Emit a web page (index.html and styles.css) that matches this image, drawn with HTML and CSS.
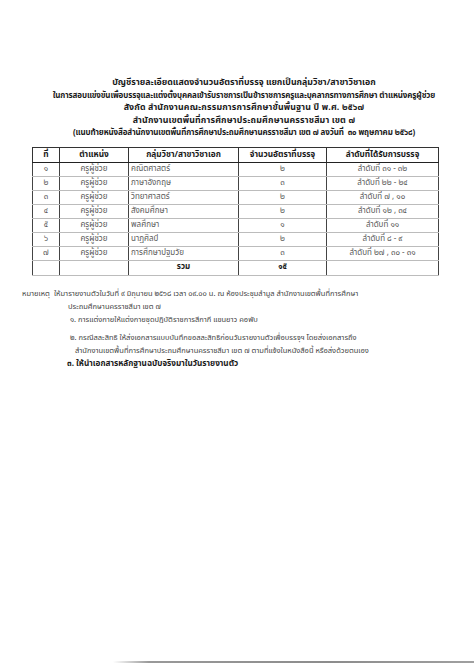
FILE: index.html
```html
<!DOCTYPE html>
<html lang="th">
<head>
<meta charset="utf-8">
<title>บัญชีรายละเอียดแสดงจำนวนอัตราที่บรรจุ</title>
<link rel="stylesheet" href="styles.css">
</head>
<body>
<div class="page">
  <div class="title">
    <div class="t-line t-first">บัญชีรายละเอียดแสดงจำนวนอัตราที่บรรจุ แยกเป็นกลุ่มวิชา/สาขาวิชาเอก</div>
    <div class="t-line">ในการสอบแข่งขันเพื่อบรรจุและแต่งตั้งบุคคลเข้ารับราชการเป็นข้าราชการครูและบุคลากรทางการศึกษา ตำแหน่งครูผู้ช่วย</div>
    <div class="t-line t-wide">สังกัด สำนักงานคณะกรรมการการศึกษาขั้นพื้นฐาน ปี พ.ศ. ๒๕๖๗</div>
    <div class="t-line t-wide">สำนักงานเขตพื้นที่การศึกษาประถมศึกษานครราชสีมา เขต ๗</div>
    <div class="t-line">(แนบท้ายหนังสือสำนักงานเขตพื้นที่การศึกษาประถมศึกษานครราชสีมา เขต ๗ ลงวันที่&nbsp; ๓๐ พฤษภาคม ๒๕๖๘)</div>
  </div>

  <table class="grid">
    <colgroup>
      <col class="c1"><col class="c2"><col class="c3"><col class="c4"><col class="c5">
    </colgroup>
    <thead>
      <tr>
        <th>ที่</th><th>ตำแหน่ง</th><th>กลุ่มวิชา/สาขาวิชาเอก</th><th>จำนวนอัตราที่บรรจุ</th><th>ลำดับที่ได้รับการบรรจุ</th>
      </tr>
    </thead>
    <tbody>
      <tr><td class="ctr">๑</td><td class="ctr">ครูผู้ช่วย</td><td>คณิตศาสตร์</td><td class="ctr">๒</td><td class="ctr">ลำดับที่ ๓๑ - ๓๒</td></tr>
      <tr><td class="ctr">๒</td><td class="ctr">ครูผู้ช่วย</td><td>ภาษาอังกฤษ</td><td class="ctr">๓</td><td class="ctr">ลำดับที่ ๒๒ - ๒๔</td></tr>
      <tr><td class="ctr">๓</td><td class="ctr">ครูผู้ช่วย</td><td>วิทยาศาสตร์</td><td class="ctr">๒</td><td class="ctr">ลำดับที่ ๗ , ๑๐</td></tr>
      <tr><td class="ctr">๔</td><td class="ctr">ครูผู้ช่วย</td><td>สังคมศึกษา</td><td class="ctr">๒</td><td class="ctr">ลำดับที่ ๑๒ , ๓๔</td></tr>
      <tr><td class="ctr">๕</td><td class="ctr">ครูผู้ช่วย</td><td>พลศึกษา</td><td class="ctr">๑</td><td class="ctr">ลำดับที่ ๑๑</td></tr>
      <tr><td class="ctr">๖</td><td class="ctr">ครูผู้ช่วย</td><td>นาฏศิลป์</td><td class="ctr">๒</td><td class="ctr">ลำดับที่ ๘ - ๙</td></tr>
      <tr><td class="ctr">๗</td><td class="ctr">ครูผู้ช่วย</td><td>การศึกษาปฐมวัย</td><td class="ctr">๓</td><td class="ctr">ลำดับที่ ๒๗ , ๓๐ - ๓๑</td></tr>
      <tr class="total"><td></td><td></td><td class="ctr">รวม</td><td class="ctr">๑๕</td><td></td></tr>
    </tbody>
  </table>

  <div class="notes">
    <div class="n-head"><span class="n-label">หมายเหตุ</span><span class="n-text">ให้มารายงานตัวในวันที่ ๙ มิถุนายน ๒๕๖๘ เวลา ๐๙.๐๐ น. ณ ห้องประชุมลำมูล สำนักงานเขตพื้นที่การศึกษา</span></div>
    <div class="n-cont">ประถมศึกษานครราชสีมา เขต ๗</div>
    <div class="n-item">๑. การแต่งกายให้แต่งกายชุดปฏิบัติราชการสีกากี แขนยาว คอพับ</div>
    <div class="n-item n-gap">๒. กรณีสละสิทธิ ให้ส่งเอกสารแบบบันทึกขอสละสิทธิก่อนวันรายงานตัวเพื่อบรรจุฯ โดยส่งเอกสารถึง</div>
    <div class="n-item n-sub">สำนักงานเขตพื้นที่การศึกษาประถมศึกษานครราชสีมา เขต ๗ ตามที่แจ้งในหนังสือนี้ หรือส่งด้วยตนเอง</div>
    <div class="n-item n-bold">๓. ให้นำเอกสารหลักฐานฉบับจริงมาในวันรายงานตัว</div>
  </div>

  <div class="scan-edge"></div>
</div>
</body>
</html>
```

FILE: styles.css
```css
html, body {
  margin: 0;
  padding: 0;
  background: #ffffff;
}

body {
  width: 474px;
  height: 670px;
  overflow: hidden;
  font-family: "Noto Sans Thai", "Loma", "Garuda", "Noto Sans", "DejaVu Sans", sans-serif;
  color: #2b2b2b;
}

.page {
  display: flex;
  flex-direction: column;
  height: 670px;
  box-sizing: border-box;
  padding-top: 77px;
}

.title {
  display: flex;
  flex-direction: column;
  align-items: center;
  padding-left: 14px;
  font-weight: bold;
  font-size: 8px;
  letter-spacing: -0.12px;
  line-height: 12.6px;
  color: #1a1a1a;
}

.t-line {
  white-space: nowrap;
}

.t-first {
  font-size: 8.8px;
  letter-spacing: 0;
}

.t-wide {
  font-size: 8.8px;
  letter-spacing: 0.15px;
}

.grid {
  margin: 7px 0 0 32px;
  width: 406px;
  border-collapse: collapse;
  table-layout: fixed;
  border: 1.4px solid #333;
  font-size: 8px;
}

.c1 { width: 27px; }
.c2 { width: 69px; }
.c3 { width: 110px; }
.c4 { width: 88px; }
.c5 { width: 112px; }

.grid th {
  height: 14px;
  padding: 0;
  font-weight: bold;
  font-size: 8.3px;
  color: #1a1a1a;
  border: 1px solid #333;
  border-bottom: 1.4px solid #222;
  white-space: nowrap;
}

.grid td {
  height: 13px;
  padding: 0 0 0 2px;
  border-left: 1px solid #444;
  border-right: 1px solid #444;
  border-bottom: 1px solid #bcbcbc;
  color: #5a5a5a;
  white-space: nowrap;
  line-height: 13px;
}

.grid td.ctr {
  text-align: center;
  padding: 0;
}

.grid tr.total td {
  border-top: 1.2px solid #333;
  font-weight: bold;
  color: #1a1a1a;
  height: 14px;
}

.notes {
  margin: 11px 0 0 22px;
  font-size: 7.5px;
  line-height: 13px;
  color: #444;
}

.n-head {
  display: flex;
  gap: 4px;
  white-space: nowrap;
}

.n-cont {
  padding-left: 46px;
  white-space: nowrap;
}

.n-item {
  padding-left: 48px;
  white-space: nowrap;
}

.n-gap {
  margin-top: 5px;
}

.n-sub {
  padding-left: 53px;
}

.n-bold {
  padding-left: 45px;
  font-weight: bold;
  font-size: 8.2px;
  color: #1a1a1a;
}

.scan-edge {
  margin: auto 0 7px 113px;
  width: 361px;
  height: 2px;
  background: linear-gradient(90deg, rgba(150,150,150,0) 0%, #999 10%, #8c8c8c 60%, #a0a0a0 100%);
}
```
